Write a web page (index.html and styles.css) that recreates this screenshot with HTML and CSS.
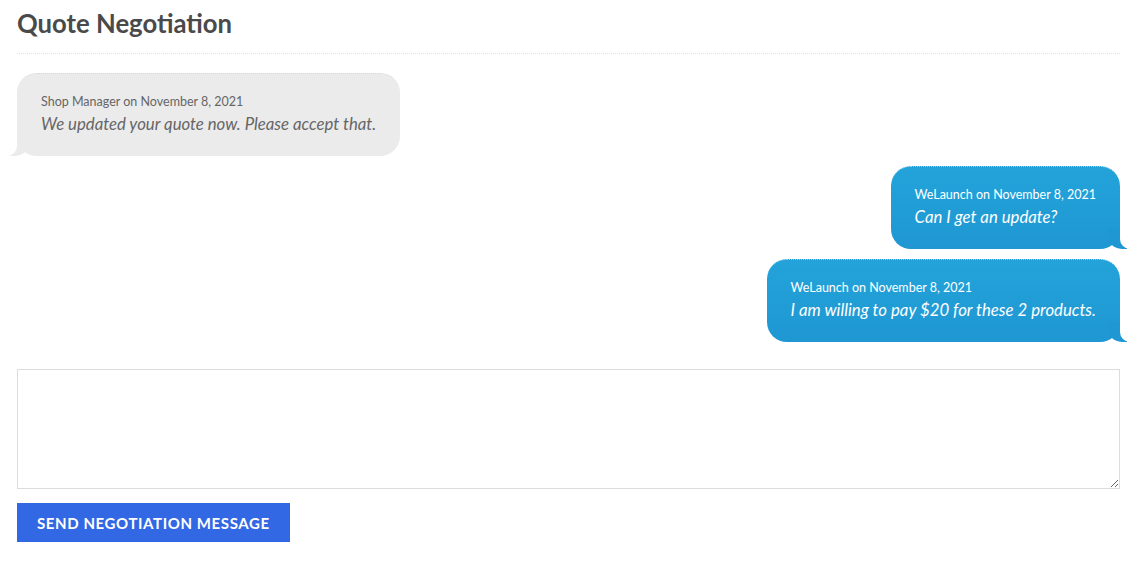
FILE: index.html
```html
<!DOCTYPE html>
<html>
<head>
<meta charset="utf-8">
<link rel="stylesheet" href="styles.css">
</head>
<body>
<div class="page">
  <h2 class="title">Quote Negotiation</h2>
  <div class="thread">
    <div class="row row-left">
      <div class="bubble bubble-in">
        <div class="meta">Shop Manager on November 8, 2021</div>
        <div class="text">We updated your quote now. Please accept that.</div>
      </div>
    </div>
    <div class="row row-right">
      <div class="bubble bubble-out">
        <div class="meta">WeLaunch on November 8, 2021</div>
        <div class="text">Can I get an update?</div>
      </div>
    </div>
    <div class="row row-right">
      <div class="bubble bubble-out">
        <div class="meta">WeLaunch on November 8, 2021</div>
        <div class="text">I am willing to pay $20 for these 2 products.</div>
      </div>
    </div>
  </div>
  <textarea class="input"></textarea>
  <button class="send">Send Negotiation Message</button>
</div>
</body>
</html>
```
FILE: styles.css
```css
html, body {
  margin: 0;
  padding: 0;
  background: #fff;
}
body {
  font-family: Lato, "Open Sans", sans-serif;
  color: #444;
}
.page {
  padding: 8px 23px 0 17px;
}
.title {
  margin: 0;
  font-size: 25.7px;
  line-height: 31px;
  font-weight: 700;
  color: #4a4a4a;
  padding-bottom: 14px;
  border-bottom: 1px dotted #e2e2e2;
}
.thread {
  display: flex;
  flex-direction: column;
  gap: 10px;
  margin-top: 19px;
}
.row {
  display: flex;
}
.row-left { justify-content: flex-start; }
.row-right { justify-content: flex-end; }
.bubble {
  position: relative;
  border-radius: 20px;
  padding: 19px 24px 20px 24px;
  border-top: 1px dotted rgba(255,255,255,0.7);
}
.bubble-in {
  background: #ebebeb;
  color: #666;
  border-top-color: #d6d6d6;
}
.bubble-out {
  background: linear-gradient(#23a3da, #1f97d2);
  color: #fff;
  border-top-color: #9fd4ee;
}
.meta {
  font-size: 12.5px;
  line-height: 18px;
}
.text {
  font-size: 16.75px;
  line-height: 24px;
  font-style: italic;
  margin-top: 1px;
}
.bubble::before,
.bubble::after {
  content: "";
  position: absolute;
  bottom: 0;
  height: 20px;
}
.bubble-in::before {
  left: -7px;
  width: 20px;
  background: #ebebeb;
  border-bottom-right-radius: 15px;
}
.bubble-in::after {
  left: -10px;
  width: 10px;
  background: #fff;
  border-bottom-right-radius: 10px;
}
.bubble-out::before {
  right: -7px;
  width: 20px;
  background: #1f97d2;
  border-bottom-left-radius: 15px;
}
.bubble-out::after {
  right: -10px;
  width: 10px;
  background: #fff;
  border-bottom-left-radius: 10px;
}
.input {
  display: block;
  box-sizing: border-box;
  width: 100%;
  height: 120px;
  margin-top: 27px;
  border: 1px solid #dcdcdc;
  background: #fff;
  font-family: Lato, sans-serif;
}
.send {
  display: block;
  margin-top: 14px;
  background: #3368e4;
  color: #fff;
  border: none;
  height: 39px;
  padding: 0 20px;
  font-family: Lato, sans-serif;
  font-weight: 700;
  font-size: 15px;
  letter-spacing: 0.6px;
  text-transform: uppercase;
  cursor: pointer;
}
```
